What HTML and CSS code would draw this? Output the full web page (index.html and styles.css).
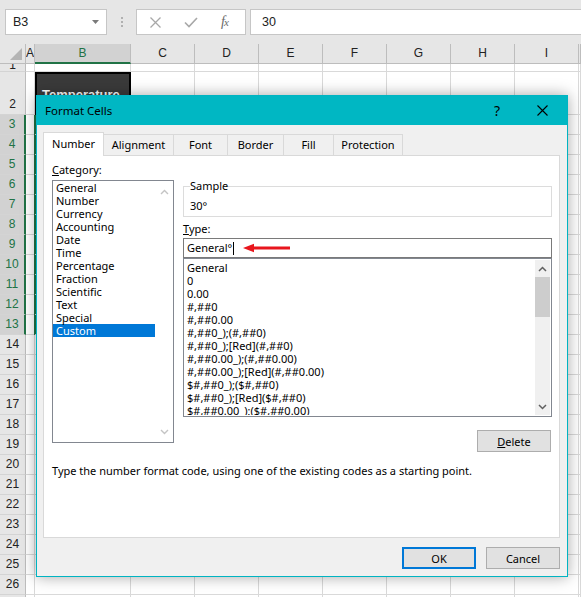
FILE: index.html
```html
<!DOCTYPE html>
<html>
<head>
<meta charset="utf-8">
<title>Format Cells</title>
<link rel="stylesheet" href="styles.css">
</head>
<body>
<div class="fbar">
  <div class="namebox"><span>B3</span><svg class="dd" width="7" height="4" viewBox="0 0 7 4"><path d="M0 0h7L3.5 4z" fill="#7a7a7a"/></svg></div>
  <div class="dots"><i></i><i></i><i></i></div>
  <div class="fbtns">
    <svg class="fx-x" width="11" height="11" viewBox="0 0 11 11"><path d="M0.5 0.5l10 10M10.5 0.5l-10 10" stroke="#a8a8a8" stroke-width="1.3"/></svg>
    <svg class="fx-ok" width="14" height="11" viewBox="0 0 14 11"><path d="M1 5.5l4 4L13 1" stroke="#a8a8a8" fill="none" stroke-width="1.6"/></svg>
    <span class="fx">f<span class="fxx">x</span></span>
  </div>
  <div class="finput">30</div>
</div>

<div class="sheet">
  <div class="ch corner"><svg width="12" height="12" viewBox="0 0 12 12"><path d="M12 0V12H0z" fill="#b4b4b4"/></svg></div>
  <div class="ch">A</div><div class="ch csel">B</div><div class="ch">C</div><div class="ch">D</div><div class="ch">E</div><div class="ch">F</div><div class="ch">G</div><div class="ch">H</div><div class="ch">I</div><div class="ch"></div>

  <div class="rh r1"><span>1</span></div><i></i><i></i><i></i><i></i><i></i><i></i><i></i><i></i><i></i><i></i>
  <div class="rh">2</div><i></i><div class="dark">Temperature</div><i></i><i></i><i></i><i></i><i></i><i></i><i></i><i></i>
  <div class="rh s">3</div><i></i><i class="sb"></i><i></i><i></i><i></i><i></i><i></i><i></i><i></i><i></i>
  <div class="rh s">4</div><i></i><i class="sb"></i><i></i><i></i><i></i><i></i><i></i><i></i><i></i><i></i>
  <div class="rh s">5</div><i></i><i class="sb"></i><i></i><i></i><i></i><i></i><i></i><i></i><i></i><i></i>
  <div class="rh s">6</div><i></i><i class="sb"></i><i></i><i></i><i></i><i></i><i></i><i></i><i></i><i></i>
  <div class="rh s">7</div><i></i><i class="sb"></i><i></i><i></i><i></i><i></i><i></i><i></i><i></i><i></i>
  <div class="rh s">8</div><i></i><i class="sb"></i><i></i><i></i><i></i><i></i><i></i><i></i><i></i><i></i>
  <div class="rh s">9</div><i></i><i class="sb"></i><i></i><i></i><i></i><i></i><i></i><i></i><i></i><i></i>
  <div class="rh s">10</div><i></i><i class="sb"></i><i></i><i></i><i></i><i></i><i></i><i></i><i></i><i></i>
  <div class="rh s">11</div><i></i><i class="sb"></i><i></i><i></i><i></i><i></i><i></i><i></i><i></i><i></i>
  <div class="rh s">12</div><i></i><i class="sb"></i><i></i><i></i><i></i><i></i><i></i><i></i><i></i><i></i>
  <div class="rh s">13</div><i></i><i class="sb"></i><i></i><i></i><i></i><i></i><i></i><i></i><i></i><i></i>
  <div class="rh">14</div><i></i><i></i><i></i><i></i><i></i><i></i><i></i><i></i><i></i><i></i>
  <div class="rh">15</div><i></i><i></i><i></i><i></i><i></i><i></i><i></i><i></i><i></i><i></i>
  <div class="rh">16</div><i></i><i></i><i></i><i></i><i></i><i></i><i></i><i></i><i></i><i></i>
  <div class="rh">17</div><i></i><i></i><i></i><i></i><i></i><i></i><i></i><i></i><i></i><i></i>
  <div class="rh">18</div><i></i><i></i><i></i><i></i><i></i><i></i><i></i><i></i><i></i><i></i>
  <div class="rh">19</div><i></i><i></i><i></i><i></i><i></i><i></i><i></i><i></i><i></i><i></i>
  <div class="rh">20</div><i></i><i></i><i></i><i></i><i></i><i></i><i></i><i></i><i></i><i></i>
  <div class="rh">21</div><i></i><i></i><i></i><i></i><i></i><i></i><i></i><i></i><i></i><i></i>
  <div class="rh">22</div><i></i><i></i><i></i><i></i><i></i><i></i><i></i><i></i><i></i><i></i>
  <div class="rh">23</div><i></i><i></i><i></i><i></i><i></i><i></i><i></i><i></i><i></i><i></i>
  <div class="rh">24</div><i></i><i></i><i></i><i></i><i></i><i></i><i></i><i></i><i></i><i></i>
  <div class="rh">25</div><i></i><i></i><i></i><i></i><i></i><i></i><i></i><i></i><i></i><i></i>
  <div class="rh">26</div><i></i><i></i><i></i><i></i><i></i><i></i><i></i><i></i><i></i><i></i>
  <div class="rh">27</div><i></i><i></i><i></i><i></i><i></i><i></i><i></i><i></i><i></i><i></i>
</div>

<div class="dialog">
  <div class="titlebar">
    <span class="title">Format Cells</span>
    <span class="help">?</span>
    <svg class="close" width="11" height="11" viewBox="0 0 11 11"><path d="M0.5 0.5l10 10M10.5 0.5l-10 10" stroke="#000" stroke-width="1.1"/></svg>
  </div>
  <div class="tabs">
    <div class="tab active t1">Number</div>
    <div class="tab t2">Alignment</div>
    <div class="tab t3">Font</div>
    <div class="tab t4">Border</div>
    <div class="tab t5">Fill</div>
    <div class="tab t6">Protection</div>
  </div>
  <div class="panel">
    <div class="cols">
      <div class="left">
        <div class="lbl"><u>C</u>ategory:</div>
        <div class="catlist">
          <div class="catitems">
            <div>General</div>
            <div>Number</div>
            <div>Currency</div>
            <div>Accounting</div>
            <div>Date</div>
            <div>Time</div>
            <div>Percentage</div>
            <div>Fraction</div>
            <div>Scientific</div>
            <div>Text</div>
            <div>Special</div>
            <div class="sel">Custom</div>
          </div>
          <div class="cscroll">
            <svg width="9" height="6" viewBox="0 0 9 6"><path d="M1 5L4.5 1.5L8 5" stroke="#c4c4c4" fill="none" stroke-width="1.4"/></svg>
            <svg width="9" height="6" viewBox="0 0 9 6"><path d="M1 1L4.5 4.5L8 1" stroke="#c4c4c4" fill="none" stroke-width="1.4"/></svg>
          </div>
        </div>
      </div>
      <div class="right">
        <fieldset class="sample">
          <legend>Sample</legend>
          <div class="sval">30°</div>
        </fieldset>
        <div class="lbl tlbl"><u>T</u>ype:</div>
        <div class="typein">
          <span>General°</span><span class="caret"></span>
          <svg class="arrow" width="48" height="10" viewBox="0 0 48 10"><path d="M0 5L11 0.8V9.2Z" fill="#e8161d"/><rect x="10" y="3.5" width="37" height="3" fill="#e8161d"/></svg>
        </div>
        <div class="typelist">
          <div class="titems">
            <div>General</div>
            <div>0</div>
            <div>0.00</div>
            <div>#,##0</div>
            <div>#,##0.00</div>
            <div>#,##0_);(#,##0)</div>
            <div>#,##0_);[Red](#,##0)</div>
            <div>#,##0.00_);(#,##0.00)</div>
            <div>#,##0.00_);[Red](#,##0.00)</div>
            <div>$#,##0_);($#,##0)</div>
            <div>$#,##0_);[Red]($#,##0)</div>
            <div>$#,##0.00_);($#,##0.00)</div>
            <div>$#,##0.00_);[Red]($#,##0.00)</div>
          </div>
          <div class="vscroll">
            <div class="sbtn"><svg width="9" height="6" viewBox="0 0 9 6"><path d="M1 5L4.5 1.5L8 5" stroke="#606060" fill="none" stroke-width="1.5"/></svg></div>
            <div class="thumb"></div>
            <div class="track"></div>
            <div class="sbtn"><svg width="9" height="6" viewBox="0 0 9 6"><path d="M1 1L4.5 4.5L8 1" stroke="#606060" fill="none" stroke-width="1.5"/></svg></div>
          </div>
        </div>
        <div class="delrow"><button class="btn"><u>D</u>elete</button></div>
      </div>
    </div>
    <p class="desc">Type the number format code, using one of the existing codes as a starting point.</p>
  </div>
  <div class="footer">
    <button class="btn ok">OK</button>
    <button class="btn">Cancel</button>
  </div>
</div>
</body>
</html>
```

FILE: styles.css
```css
* { box-sizing: border-box; }
html, body { margin: 0; padding: 0; }
body {
  width: 581px;
  height: 597px;
  overflow: hidden;
  background: #fff;
  position: relative;
  font-family: "Liberation Sans", Arial, sans-serif;
}

/* formula bar */
.fbar {
  width: 581px;
  height: 44px;
  background: #e6e6e6;
  display: flex;
  align-items: flex-start;
  padding: 9px 0 0 5px;
  overflow: hidden;
}
.namebox {
  width: 102px;
  height: 26px;
  background: #fff;
  border: 1px solid #c6c6c6;
  display: flex;
  align-items: center;
  justify-content: space-between;
  padding: 0 7px;
  font-size: 12.5px;
  color: #222;
}
.dots {
  margin: 8px 0 0 14px;
  width: 2px;
  display: flex;
  flex-direction: column;
  gap: 2px;
}
.dots i { display: block; width: 2px; height: 2px; background: #b0b0b0; }
.fbtns {
  margin-left: 13px;
  width: 110px;
  height: 26px;
  background: #fff;
  border: 1px solid #c6c6c6;
  display: flex;
  align-items: center;
  padding-left: 13px;
}
.fx-ok { margin-left: 23px; }
.fx {
  margin-left: 23px;
  font-family: "Liberation Serif", serif;
  font-style: italic;
  font-size: 14px;
  color: #6a6a6a;
  letter-spacing: -1px;
}
.fxx { font-size: 11px; }
.finput {
  margin-left: 4px;
  flex: 1;
  height: 26px;
  background: #fff;
  border: 1px solid #c6c6c6;
  border-right: none;
  padding-left: 11px;
  line-height: 24px;
  font-size: 12.5px;
  color: #222;
}

/* sheet grid */
.sheet {
  width: 581px;
  overflow: hidden;
  display: grid;
  grid-template-columns: 26px 9px 96px repeat(7, 64px) 2px;
  grid-template-rows: 20px 8px 43px repeat(25, 20px);
  font-size: 12px;
  color: #222;
}
.sheet i {
  display: block;
  border-right: 1px solid #d9d9d9;
  border-bottom: 1px solid #d9d9d9;
}
.ch {
  background: #e6e6e6;
  border-right: 1px solid #bdbdbd;
  border-bottom: 1px solid #bdbdbd;
  text-align: center;
  line-height: 19px;
  overflow: hidden;
}
.ch.corner {
  display: flex;
  align-items: flex-end;
  justify-content: flex-end;
  padding: 0 3px 3px 0;
}
.ch.csel {
  background: #d2d2d2;
  color: #217346;
  border-bottom: 2px solid #217346;
}
.rh {
  background: #e6e6e6;
  border-right: 1px solid #bdbdbd;
  border-bottom: 1px solid #d4d4d4;
  display: flex;
  align-items: flex-end;
  justify-content: center;
  line-height: 19px;
  overflow: hidden;
}
.rh.r1 { line-height: 12px; }
.rh.s {
  background: #d2d2d2;
  color: #217346;
  border-right: 2px solid #217346;
}
.sheet .sb { box-shadow: inset 1px 0 0 #217346, -1px 0 0 #217346; }
.dark {
  background: #3a3a3a;
  box-shadow: inset 0 0 0 2px #000;
  color: #fff;
  font-weight: bold;
  font-size: 13px;
  line-height: 16px;
  padding: 15px 0 0 7px;
  white-space: nowrap;
  overflow: hidden;
}

/* dialog */
.dialog {
  position: absolute;
  left: 36px;
  top: 95px;
  width: 532px;
  height: 482px;
  background: #f0f0f0;
  border: 1px solid #00b4c2;
  box-shadow: 0 0 14px rgba(0, 0, 0, 0.35);
  font-family: "Noto Sans", "Open Sans", sans-serif;
  font-size: 11px;
  color: #000;
  display: flex;
  flex-direction: column;
}
.titlebar {
  height: 29px;
  background: #00b7c3;
  display: flex;
  align-items: center;
  padding-left: 8px;
  flex: none;
}
.title { flex: 1; font-size: 11.5px; }
.help { font-size: 14px; margin-right: 37px; }
.close { margin-right: 19px; }

.tabs {
  margin: 7px 0 0 6px;
  height: 23px;
  display: flex;
  align-items: flex-start;
  flex: none;
}
.tab {
  height: 21px;
  margin-top: 2px;
  margin-left: -1px;
  border: 1px solid #d9d9d9;
  border-bottom: none;
  background: #f0f0f0;
  display: flex;
  align-items: center;
  justify-content: center;
  padding-bottom: 1px;
}
.tab.active {
  position: relative;
  z-index: 1;
  height: 24px;
  margin-top: 0;
  margin-left: 0;
  background: #fff;
  padding-bottom: 2px;
}
.t1 { width: 61px; }
.t2 { width: 71px; }
.t3 { width: 55px; }
.t4 { width: 57px; }
.t5 { width: 51px; }
.t6 { width: 70px; }

.panel {
  margin-left: 6px;
  width: 517px;
  height: 383px;
  background: #fff;
  border: 1px solid #d9d9d9;
  padding: 7px 7px 0 8px;
  flex: none;
}
.cols { display: flex; gap: 9px; align-items: flex-start; }
.left { width: 122px; }
.right { width: 369px; }
.lbl { line-height: 14px; height: 14px; margin-bottom: 3px; white-space: nowrap; }

.catlist {
  height: 263px;
  border: 1px solid #828790;
  background: #fff;
  display: flex;
}
.catitems { width: 102px; }
.catitems div { height: 13px; line-height: 13px; padding-left: 3px; white-space: nowrap; }
.catitems .sel { background: #0078d7; color: #fff; }
.cscroll {
  flex: 1;
  display: flex;
  flex-direction: column;
  justify-content: space-between;
  align-items: center;
  padding: 8px 0 7px;
}

.sample {
  margin: 16px 0 0;
  padding: 6px 6px 3px;
  border: 1px solid #dcdcdc;
  min-width: 0;
}
.sample legend { padding: 0; line-height: 14px; }
.sval { line-height: 14px; }
.tlbl { margin-top: 5px; margin-bottom: 2px; }

.typein {
  height: 20px;
  border: 1px solid #7a7a7a;
  background: #fff;
  display: flex;
  align-items: center;
  padding-left: 3px;
  line-height: 14px;
}
.caret { display: inline-block; width: 1px; height: 13px; background: #000; margin-left: 1px; }
.arrow { margin-left: 9px; }

.typelist {
  height: 159px;
  border: 1px solid #828790;
  background: #fff;
  display: flex;
  padding: 1px;
}
.titems { flex: 1; padding: 1px 0 0 2px; overflow: hidden; }
.titems div { height: 13px; line-height: 13px; white-space: nowrap; }
.vscroll {
  width: 15px;
  background: #f0f0f0;
  display: flex;
  flex-direction: column;
}
.sbtn { height: 17px; display: flex; align-items: center; justify-content: center; flex: none; }
.thumb { height: 40px; background: #cdcdcd; flex: none; }
.track { flex: 1; }

.delrow { display: flex; justify-content: flex-end; margin-top: 13px; padding-right: 1px; }
.btn {
  height: 22px;
  width: 74px;
  background: #e1e1e1;
  border: 1px solid #adadad;
  font: inherit;
  color: #000;
  padding: 0;
}
.btn.ok { border: 2px solid #0078d7; }

.desc { margin: 12px 0 0; line-height: 14px; white-space: nowrap; }

.footer {
  margin-top: 9px;
  display: flex;
  justify-content: flex-end;
  gap: 10px;
  padding-right: 7px;
}
```
